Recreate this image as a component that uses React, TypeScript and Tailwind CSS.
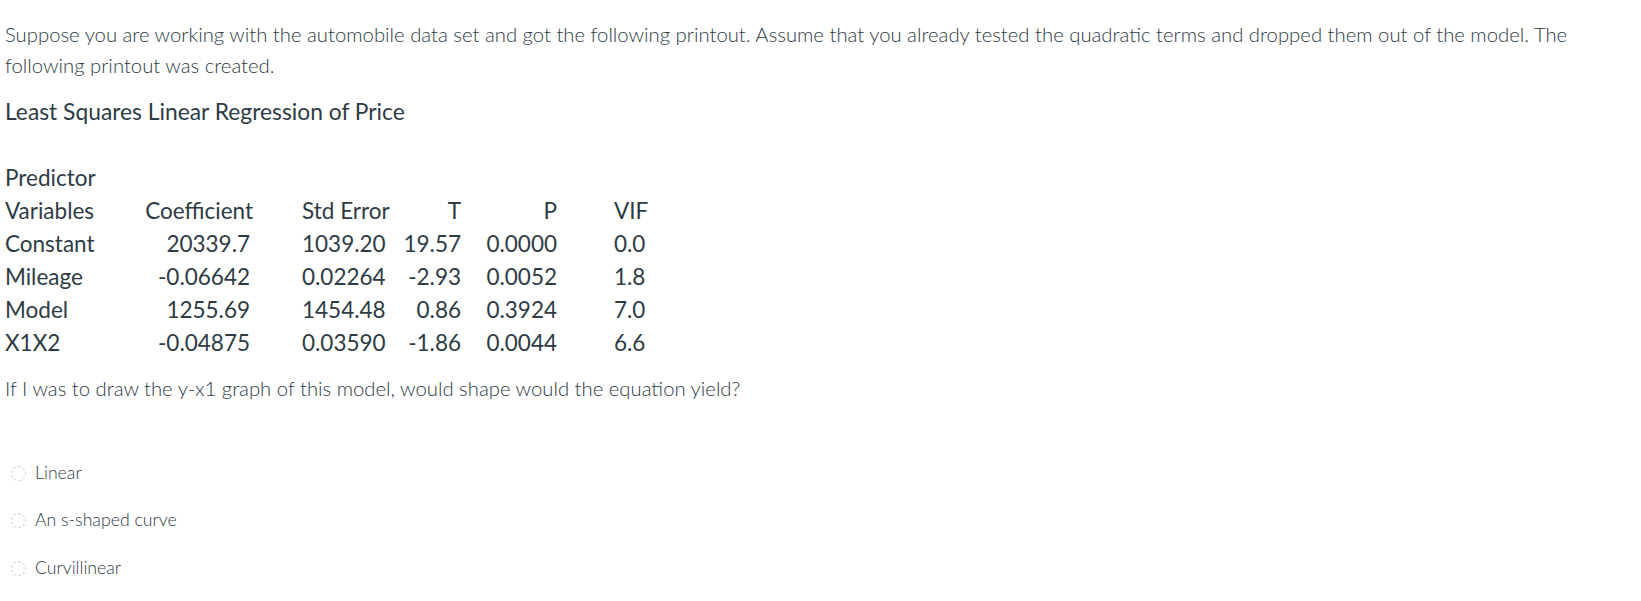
import React from "react";

const rows: { name: string; coef: string; se: string; t: string; p: string; vif: string }[] = [
  { name: "Constant", coef: "20339.7", se: "1039.20", t: "19.57", p: "0.0000", vif: "0.0" },
  { name: "Mileage", coef: "-0.06642", se: "0.02264", t: "-2.93", p: "0.0052", vif: "1.8" },
  { name: "Model", coef: "1255.69", se: "1454.48", t: "0.86", p: "0.3924", vif: "7.0" },
  { name: "X1X2", coef: "-0.04875", se: "0.03590", t: "-1.86", p: "0.0044", vif: "6.6" },
];

function Row({
  a,
  b,
  c,
  d,
  e,
  f,
  num = false,
}: {
  a: string;
  b: string;
  c: string;
  d: string;
  e: string;
  f: string;
  num?: boolean;
}) {
  return (
    <div className="flex h-[33px] items-center whitespace-nowrap">
      <div className="w-[135px]">{a}</div>
      <div className={num ? "w-[113px] pr-[3px] text-right" : "w-[113px] text-right"}>{b}</div>
      <div className="ml-[49px] w-[100px]">{c}</div>
      <div className="w-[59px] text-right">{d}</div>
      <div className="w-[96px] text-right">{e}</div>
      <div className="ml-[57px]">{f}</div>
    </div>
  );
}

function Option({ label }: { label: string }) {
  return (
    <div className="flex h-[24px] items-center">
      <span className="ml-[6px] mr-[9px] inline-block h-[15px] w-[15px] rounded-full border border-dashed border-[#c8ccd0]" />
      <span className="text-[17.7px] font-light text-[#2d3b45]">{label}</span>
    </div>
  );
}

export default function App() {
  return (
    <div
      className="w-[1641px] h-[601px] bg-white pl-[5px] pt-[19px] text-[#2d3b45]"
      style={{ fontFamily: "Lato, 'Open Sans', sans-serif" }}
    >
      <p className="max-w-[1600px] text-[20.3px] font-light leading-[31px]">
        Suppose you are working with the automobile data set and got the following printout. Assume that you already
        tested the quadratic terms and dropped them out of the model. The following printout was created.
      </p>
      <h2 className="mt-[15px] text-[22.8px] leading-[30px]">Least Squares Linear Regression of Price</h2>
      <div className="mt-[35px] text-[22.5px]">
        <div className="flex h-[33px] items-center">Predictor</div>
        <Row a="Variables" b="Coefficient" c="Std Error" d="T" e="P" f="VIF" />
        {rows.map((r) => (
          <Row key={r.name} a={r.name} b={r.coef} c={r.se} d={r.t} e={r.p} f={r.vif} num />
        ))}
      </div>
      <p className="mt-[14px] text-[20.3px] font-light leading-[30px]">
        If I was to draw the y-x1 graph of this model, would shape would the equation yield?
      </p>
      <div className="mt-[58px] flex flex-col gap-[23.5px]">
        <Option label="Linear" />
        <Option label="An s-shaped curve" />
        <Option label="Curvillinear" />
      </div>
    </div>
  );
}
